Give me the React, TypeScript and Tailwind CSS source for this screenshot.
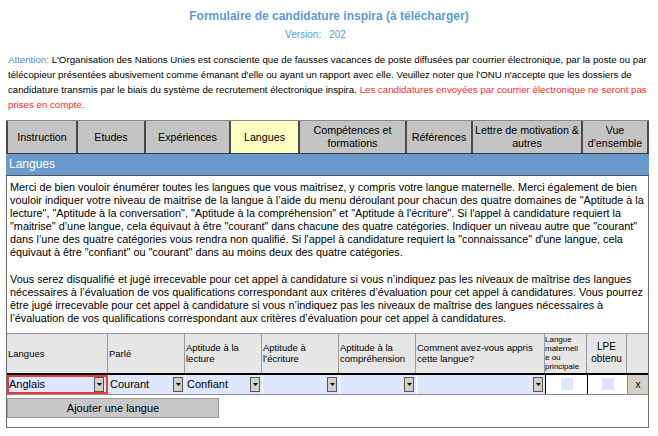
import clsx from 'clsx';

const tabs = [
  { label: 'Instruction' },
  { label: 'Etudes' },
  { label: 'Expériences' },
  { label: 'Langues', active: true },
  { label: 'Compétences et\nformations' },
  { label: 'Références' },
  { label: 'Lettre de motivation &\nautres' },
  { label: "Vue\nd'ensemble" },
];

const headers = [
  'Langues',
  'Parlé',
  'Aptitude à la\nlecture',
  'Aptitude à\nl’écriture',
  'Aptitude à la\ncompréhension',
  'Comment avez-vous appris\ncette langue?',
];

// Small 3D dropdown button, like the old form controls
function DropArrow() {
  return (
    <span className="flex h-[15px] w-[10px] shrink-0 items-center justify-center border border-[#555] bg-[#d4d0c8]">
      <svg width="5" height="3" viewBox="0 0 5 3">
        <path d="M0 0h5L2.5 3z" fill="#000" />
      </svg>
    </span>
  );
}

function SelectCell({ value, invalid }: { value?: string; invalid?: boolean }) {
  return (
    <div
      className={clsx(
        'flex items-center justify-between bg-[#dfe6ff] pr-[2px] text-[11px] leading-[13px]',
        invalid ? 'border-2 border-[#e63c3c] pl-0' : 'ml-[1px] pl-[1px]'
      )}
    >
      <span>{value}</span>
      <DropArrow />
    </div>
  );
}

export default function App() {
  return (
    <div className="h-[436px] w-[658px] overflow-hidden bg-white font-['Liberation_Sans',Arial,sans-serif] text-black">
      <h1 className="pt-[8px] text-center text-[12px] font-bold leading-[16px] text-[#5b9bd5]">
        Formulaire de candidature inspira (à télécharger)
      </h1>
      <div className="mt-[4px] flex justify-center pr-[27px] text-[10px] leading-[14px] text-[#5b9bd5]">
        <span>Version:</span>
        <span className="ml-[8px]">202</span>
      </div>

      <p className="mt-[10px] whitespace-nowrap pl-[8px] text-[9.7px] leading-[15px]">
        <span className="text-[#4a90d0]">Attention:</span> L'Organisation des Nations Unies est consciente que de
        fausses vacances de poste diffusées par courrier électronique, par la poste ou par
        <br />
        télécopieur présentées abusivement comme émanant d'elle ou ayant un rapport avec elle. Veuillez noter que
        l'ONU n'accepte que les dossiers de
        <br />
        candidature transmis par le biais du système de recrutement électronique inspira.{' '}
        <span className="text-[#ff2a2a]">
          Les candidatures envoyées par courrier électronique ne seront pas
          <br />
          prises en compte.
        </span>
      </p>

      <div className="ml-[6px] mt-[8px] w-[643px]">
        {/* tab strip */}
        <div className="grid grid-cols-[70px_68px_85px_69px_107px_66px_110px_68px] border-t border-b border-[#8a8a8a] border-b-[#3c3c3c]">
          {tabs.map((t, i) => (
            <div
              key={t.label}
              className={clsx(
                'flex h-[32px] items-center justify-center whitespace-pre-line border-l-2 border-[#4a4a4a] text-center text-[10.7px] leading-[13px]',
                i === tabs.length - 1 && 'border-r-2',
                t.active ? 'bg-[#ffffc4]' : 'bg-[#c4c4c4]'
              )}
            >
              {t.label}
            </div>
          ))}
        </div>

        {/* section bar */}
        <div className="h-[22px] border-b border-[#555] bg-[#6a9acb] pl-[3px] text-[12px] leading-[21px] text-white">
          Langues
        </div>

        <div className="border-x border-b border-[#6e6e6e]">
          <div className="whitespace-nowrap px-[3px] pt-[5px] text-[10.85px] leading-[13.1px]">
            <p>
              Merci de bien vouloir énumérer toutes les langues que vous maitrisez, y compris votre langue maternelle.
              Merci également de bien
              <br />
              vouloir indiquer votre niveau de maitrise de la langue à l’aide du menu déroulant pour chacun des quatre
              domaines de "Aptitude à la
              <br />
              lecture", "Aptitude à la conversation", "Aptitude à la compréhension" et "Aptitude à l'écriture". Si
              l'appel à candidature requiert la
              <br />
              "maitrise" d’une langue, cela équivaut à être "courant" dans chacune des quatre catégories. Indiquer un
              niveau autre que "courant"
              <br />
              dans l’une des quatre catégories vous rendra non qualifié. Si l'appel à candidature requiert la
              "connaissance" d'une langue, cela
              <br />
              équivaut à être "confiant" ou "courant" dans au moins deux des quatre catégories.
            </p>
            <p className="mt-[13px]">
              Vous serez disqualifié et jugé irrecevable pour cet appel à candidature si vous n’indiquez pas les
              niveaux de maîtrise des langues
              <br />
              nécessaires à l’évaluation de vos qualifications correspondant aux critères d’évaluation pour cet appel
              à candidatures. Vous pourrez
              <br />
              être jugé irrecevable pour cet appel à candidature si vous n’indiquez pas les niveaux de maîtrise des
              langues nécessaires à
              <br />
              l’évaluation de vos qualifications correspondant aux critères d’évaluation pour cet appel à candidatures.
            </p>
          </div>

          {/* languages table */}
          <div className="mt-[8px] grid h-[40px] grid-cols-[101px_77px_77px_77px_77px_129px_42px_40px_21px] border-t border-[#9a9a9a] bg-[#e6e6e6] text-[9.5px] leading-[11px]">
            {headers.map((h) => (
              <div key={h} className="flex items-center whitespace-pre-line border-r border-[#9a9a9a] pl-[1px]">
                {h}
              </div>
            ))}
            <div className="flex items-center whitespace-pre-line border-r border-[#9a9a9a] text-[8px] leading-[9px]">
              {'Langue\nmaternell\ne ou\nprincipale'}
            </div>
            <div className="flex items-center justify-center whitespace-pre-line border-r border-[#9a9a9a] text-center text-[10px] leading-[12px]">
              {'LPE\nobtenu'}
            </div>
            <div />
          </div>

          <div className="grid h-[22px] grid-cols-[101px_77px_77px_77px_77px_129px_42px_40px_21px] border-t-2 border-b border-t-black border-b-[#8a8a8a] bg-white">
            <SelectCell value="Anglais" invalid />
            <SelectCell value="Courant" />
            <SelectCell value="Confiant" />
            <SelectCell />
            <SelectCell />
            <SelectCell />
            <div className="flex items-center justify-center border-l border-black">
              <span className="h-[12px] w-[12px] bg-[#dfe6ff]" />
            </div>
            <div className="flex items-center justify-center border-l border-black">
              <span className="h-[12px] w-[12px] bg-[#dfe6ff]" />
            </div>
            <div className="flex items-center justify-center border-l border-[#8a8a8a] bg-[#d4d0c8] text-[10px]">
              x
            </div>
          </div>

          <div className="pb-[8px]">
            <button className="h-[20px] w-[212px] border border-[#9a9a9a] bg-[#c8c8c8] text-center text-[11px] leading-[18px]">
              Ajouter une langue
            </button>
          </div>
        </div>
      </div>
    </div>
  );
}
